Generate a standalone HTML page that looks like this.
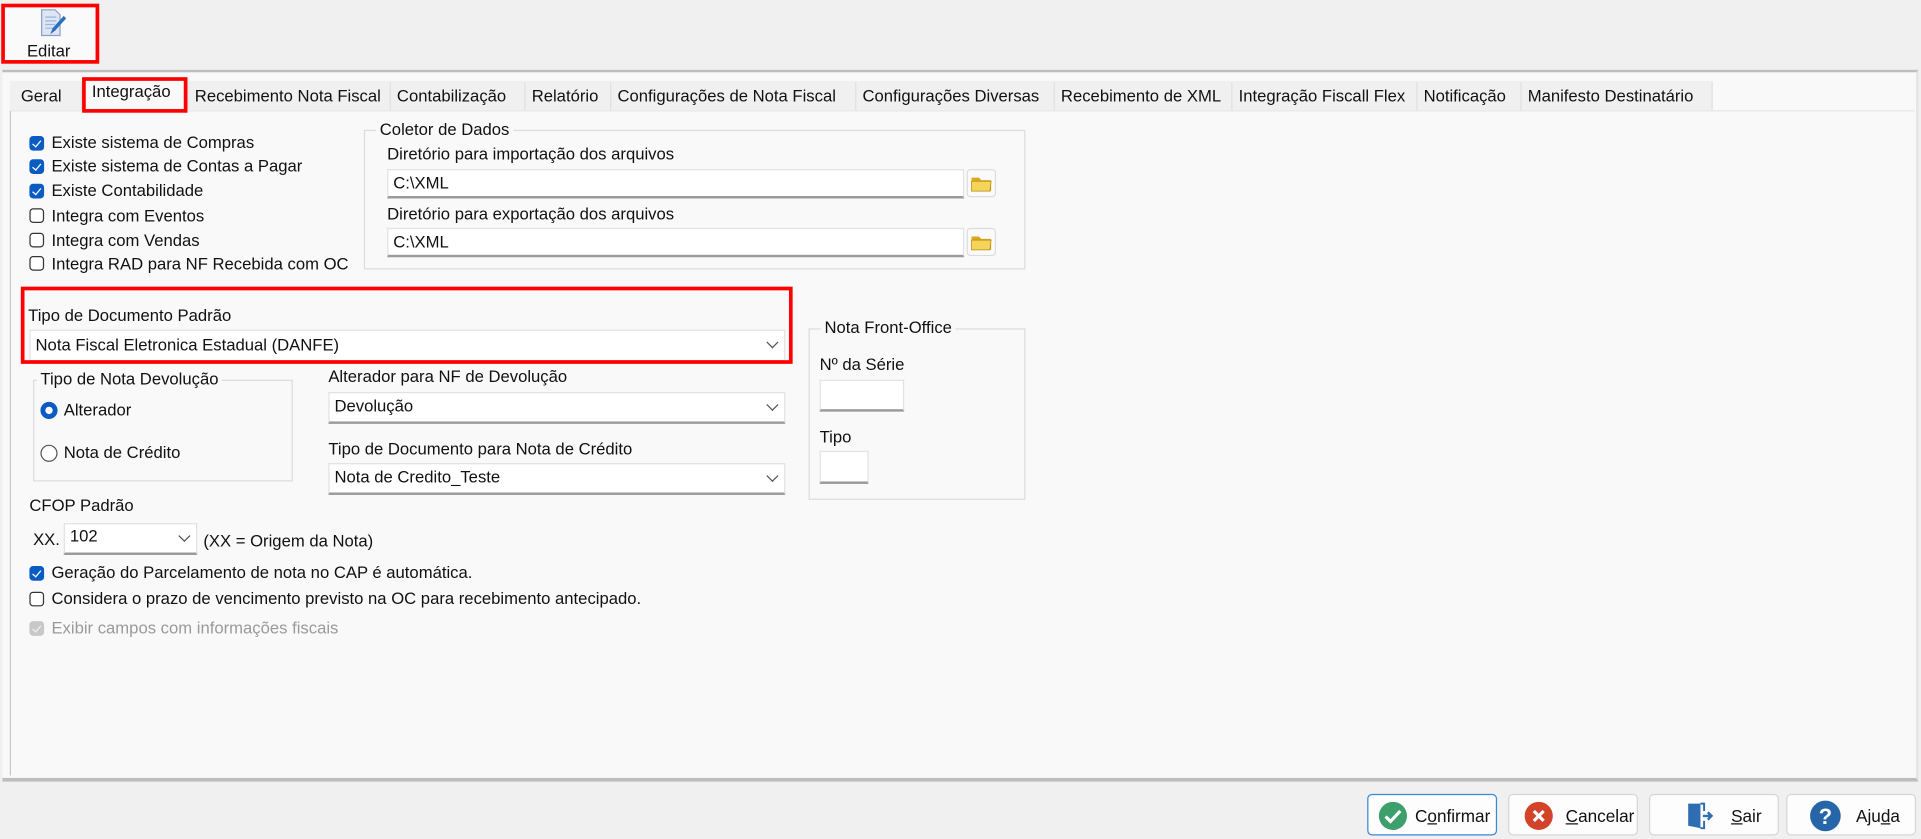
<!DOCTYPE html>
<html><head><meta charset="utf-8">
<style>
html,body{margin:0;padding:0;width:1921px;height:839px;overflow:hidden;background:#f0f0f0;}
#s{position:absolute;left:0;top:0;width:1568px;height:685px;transform:scale(1.2251);transform-origin:0 0;font-family:"Liberation Sans",sans-serif;font-size:13.6px;color:#111;}
.a{position:absolute;white-space:nowrap;}
.red{position:absolute;border:3px solid #f00;box-sizing:border-box;}
.tab{position:absolute;top:67px;height:23px;line-height:23px;text-align:left;padding-left:4px;box-sizing:border-box;background:#f0f0f0;border-right:1px solid #e0e0e0;white-space:nowrap;}
.cb{position:absolute;width:12px;height:12px;border:1px solid #333;border-radius:3px;background:#fff;box-sizing:border-box;}
.cb.on{background:#0b5cc2;border-color:#0b5cc2;}
.cb.on:after{content:"";position:absolute;left:3px;top:1px;width:3px;height:6px;border:solid #fff;border-width:0 1.3px 1.3px 0;transform:rotate(40deg);}
.cb.dis{background:#c8c8c8;border-color:#c8c8c8;}
.cb.dis:after{content:"";position:absolute;left:3px;top:1px;width:3px;height:6px;border:solid #eee;border-width:0 1.3px 1.3px 0;transform:rotate(40deg);}
.lbl{position:absolute;white-space:nowrap;}
.inp{position:absolute;background:#fff;border:1px solid #e2e2e2;border-bottom:2px solid #9a9a9a;box-sizing:border-box;padding-left:4px;line-height:21px;}
.combo:after{content:"";position:absolute;right:6px;top:6px;width:6px;height:6px;border:solid #555;border-width:0 1px 1px 0;transform:rotate(45deg);}
.grp{position:absolute;border:1px solid #dcdcdc;box-sizing:border-box;}
.gt{position:absolute;background:#f9f9f9;padding:0 3px;top:-9px;}
.fold{position:absolute;width:24px;height:23px;border:1px solid #dcdcdc;border-radius:3px;background:#fafafa;box-sizing:border-box;}
.btn{position:absolute;top:648px;height:34px;width:106px;background:#fdfdfd;border:1px solid #d6d6d6;border-radius:4px;box-sizing:border-box;}
.btn span{position:absolute;top:9px;font-size:14px;}
</style></head><body><div id="s">
<div class="a" style="left:2px;top:3px;width:78px;height:48px;background:#fafafa;"></div>
<svg class="a" style="left:30px;top:6px" width="26" height="26" viewBox="0 0 26 26">
<path d="M4 2h11l4 4v17H4z" fill="#dfe6f3" stroke="#8aa0c4"/>
<path d="M7 8h9M7 11h9M7 14h8M7 17h6" stroke="#9ab2dc"/>
<path d="M11 22l2-5 9-10 2 2-9 10z" fill="#2c6fbe"/>
</svg>
<div class="a" style="left:22px;top:34px;font-size:13.6px;">Editar</div>
<div class="red" style="left:1px;top:3px;width:80px;height:49px;"></div>
<div class="a" style="left:2px;top:57px;width:1564px;height:581px;background:#f9f9f9;border-top:2px solid #bdbdbd;border-right:2px solid #e5e5e5;border-bottom:3px solid #bdbdbd;box-sizing:border-box;"></div>
<div class="a" style="left:8px;top:90px;width:1555px;height:543px;border-left:1px solid #c8c8c8;border-top:1px solid #e6e6e6;box-sizing:border-box;"></div>
<div class="a" style="left:8px;top:66px;width:1390px;height:24px;background:#f0f0f0;"></div>
<div class="tab" style="left:9px;width:58px;padding-left:8px;">Geral</div>
<div class="tab" style="left:68px;width:86px;top:64px;height:26px;line-height:22px;background:#f9f9f9;padding-left:7px;">Integração</div>
<div class="tab" style="left:155px;width:164px;">Recebimento Nota Fiscal</div>
<div class="tab" style="left:320px;width:109px;">Contabilização</div>
<div class="tab" style="left:430px;width:69px;">Relatório</div>
<div class="tab" style="left:500px;width:199px;">Configurações de Nota Fiscal</div>
<div class="tab" style="left:700px;width:161px;">Configurações Diversas</div>
<div class="tab" style="left:862px;width:144px;">Recebimento de XML</div>
<div class="tab" style="left:1007px;width:150px;">Integração Fiscall Flex</div>
<div class="tab" style="left:1158px;width:84px;">Notificação</div>
<div class="tab" style="left:1243px;width:155px;">Manifesto Destinatário</div>
<div class="red" style="left:67px;top:63px;width:86px;height:29px;"></div>
<div class="cb on" style="left:24px;top:111px"></div><div class="lbl" style="left:42px;top:109px">Existe sistema de Compras</div>
<div class="cb on" style="left:24px;top:130px"></div><div class="lbl" style="left:42px;top:128px">Existe sistema de Contas a Pagar</div>
<div class="cb on" style="left:24px;top:150px"></div><div class="lbl" style="left:42px;top:148px">Existe Contabilidade</div>
<div class="cb" style="left:24px;top:170px"></div><div class="lbl" style="left:42px;top:169px">Integra com Eventos</div>
<div class="cb" style="left:24px;top:190px"></div><div class="lbl" style="left:42px;top:189px">Integra com Vendas</div>
<div class="cb" style="left:24px;top:209px"></div><div class="lbl" style="left:42px;top:208px">Integra RAD para NF Recebida com OC</div>
<div class="grp" style="left:297px;top:106px;width:540px;height:114px;"><div class="gt" style="left:9px">Coletor de Dados</div></div>
<div class="lbl" style="left:316px;top:118px">Diretório para importação dos arquivos</div>
<div class="inp" style="left:316px;top:138px;width:471px;height:24px;">C:\XML</div>
<div class="lbl" style="left:316px;top:167px">Diretório para exportação dos arquivos</div>
<div class="inp" style="left:316px;top:186px;width:471px;height:24px;">C:\XML</div>
<div class="fold" style="left:789px;top:138px"><svg width="22" height="21" viewBox="0 0 22 21"><path d="M3 6h6l2 2h8v9H3z" fill="#d9a91e"/><path d="M3 9h16l-1 8H3z" fill="#f6d45a" stroke="#b88a10" stroke-width=".6"/></svg></div>
<div class="fold" style="left:789px;top:186px"><svg width="22" height="21" viewBox="0 0 22 21"><path d="M3 6h6l2 2h8v9H3z" fill="#d9a91e"/><path d="M3 9h16l-1 8H3z" fill="#f6d45a" stroke="#b88a10" stroke-width=".6"/></svg></div>
<div class="lbl" style="left:23px;top:250px">Tipo de Documento Padrão</div>
<div class="inp combo" style="left:24px;top:269px;width:617px;height:27px;line-height:24px;">Nota Fiscal Eletronica Estadual (DANFE)</div>
<div class="red" style="left:17px;top:234px;width:630px;height:63px;"></div>
<div class="grp" style="left:660px;top:268px;width:177px;height:140px;"><div class="gt" style="left:9px">Nota Front-Office</div></div>
<div class="lbl" style="left:669px;top:290px">Nº da Série</div>
<div class="inp" style="left:669px;top:310px;width:69px;height:26px;"></div>
<div class="lbl" style="left:669px;top:349px">Tipo</div>
<div class="inp" style="left:669px;top:368px;width:40px;height:27px;"></div>
<div class="grp" style="left:27px;top:310px;width:212px;height:83px;"><div class="gt" style="left:2px">Tipo de Nota Devolução</div></div>
<div class="a" style="left:33px;top:328px;width:14px;height:14px;border-radius:50%;background:#0b5cc2;box-sizing:border-box;"><div class="a" style="left:4px;top:4px;width:6px;height:6px;border-radius:50%;background:#fff"></div></div>
<div class="lbl" style="left:52px;top:327px">Alterador</div>
<div class="a" style="left:33px;top:363px;width:14px;height:14px;border-radius:50%;border:1px solid #555;background:#fff;box-sizing:border-box;"></div>
<div class="lbl" style="left:52px;top:362px">Nota de Crédito</div>
<div class="lbl" style="left:268px;top:300px">Alterador para NF de Devolução</div>
<div class="inp combo" style="left:268px;top:320px;width:373px;height:26px;">Devolução</div>
<div class="lbl" style="left:268px;top:359px">Tipo de Documento para Nota de Crédito</div>
<div class="inp combo" style="left:268px;top:378px;width:373px;height:26px;">Nota de Credito_Teste</div>
<div class="lbl" style="left:24px;top:405px">CFOP Padrão</div>
<div class="lbl" style="left:27px;top:433px">XX.</div>
<div class="inp combo" style="left:52px;top:427px;width:109px;height:26px;line-height:20px;">102</div>
<div class="lbl" style="left:166px;top:434px">(XX = Origem da Nota)</div>
<div class="cb on" style="left:24px;top:462px"></div><div class="lbl" style="left:42px;top:460px">Geração do Parcelamento de nota no CAP é automática.</div>
<div class="cb" style="left:24px;top:483px"></div><div class="lbl" style="left:42px;top:481px">Considera o prazo de vencimento previsto na OC para recebimento antecipado.</div>
<div class="cb dis" style="left:24px;top:507px"></div><div class="lbl" style="left:42px;top:505px;color:#9a9a9a">Exibir campos com informações fiscais</div>
<div class="btn" style="left:1116px;border-color:#3b86d6;">
<svg class="a" style="left:8px;top:5px" width="24" height="24" viewBox="0 0 24 24"><circle cx="12" cy="12" r="11.5" fill="#3c9f6c"/><path d="M6 12.5l4 4 8-8.5" stroke="#fff" stroke-width="2.6" fill="none"/></svg>
<span style="left:38px">C<u>o</u>nfirmar</span></div>
<div class="btn" style="left:1231px;">
<svg class="a" style="left:12px;top:5px" width="24" height="24" viewBox="0 0 24 24"><circle cx="12" cy="12" r="11.5" fill="#d2432a"/><path d="M8 8l8 8M16 8l-8 8" stroke="#fff" stroke-width="2.6"/></svg>
<span style="left:46px"><u>C</u>ancelar</span></div>
<div class="btn" style="left:1346px;">
<svg class="a" style="left:28px;top:4px" width="26" height="26" viewBox="0 0 26 26"><path d="M3 3h10v20l-10-2z" fill="#2f6db3"/><path d="M13 3h3v6M16 17v6h-3" stroke="#2f6db3" stroke-width="1.6" fill="none"/><path d="M15 13h7M19 10l3 3-3 3" stroke="#2f6db3" stroke-width="2" fill="none"/></svg>
<span style="left:66px"><u>S</u>air</span></div>
<div class="btn" style="left:1458px;">
<svg class="a" style="left:18px;top:4px" width="26" height="26" viewBox="0 0 26 26"><circle cx="13" cy="13" r="12.5" fill="#2565a8"/><text x="13" y="19.5" text-anchor="middle" font-family="Liberation Sans" font-weight="bold" font-size="18" fill="#fff">?</text></svg>
<span style="left:56px">Aju<u>d</u>a</span></div>
</div></body></html>
